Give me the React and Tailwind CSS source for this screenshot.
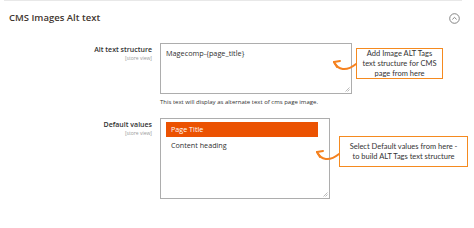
import React from "react";

function CurlArrow({ className, d }) {
  return (
    <svg className={className} width="28" height="16" viewBox="0 0 28 16" fill="none">
      <path d={d} stroke="#f58220" strokeWidth="2" fill="none" strokeLinecap="round" />
      <path d="M2 4 L8 3 M2 4 L5 9" stroke="#f58220" strokeWidth="2" strokeLinecap="round" />
    </svg>
  );
}

export default function App() {
  return (
    <div className="w-[474px] h-[228px] bg-white overflow-hidden font-['Open_Sans',sans-serif] text-[#303030]">
      <div className="mx-[4px] border-t border-[#e8e8e8] w-[458px]" />
      <div className="flex items-center justify-between pl-[9px] pr-[14px] pt-[10px]">
        <h2 className="text-[9.5px] font-semibold text-[#41362f] leading-[14px]">CMS Images Alt text</h2>
        <svg width="11" height="11" viewBox="0 0 11 11" fill="none">
          <circle cx="5.5" cy="5.5" r="4.8" stroke="#777" strokeWidth="0.9" />
          <path d="M3.4 6.4 L5.5 4.4 L7.6 6.4" stroke="#777" strokeWidth="0.9" fill="none" />
        </svg>
      </div>

      <div className="flex mt-[18px]">
        <div className="w-[152px] flex flex-col items-end pt-[2px]">
          <span className="text-[7px] font-semibold leading-[10px] text-[#303030]">Alt text structure</span>
          <span className="text-[5px] leading-[7px] text-[#999]">[store view]</span>
        </div>
        <div className="ml-[8px] flex flex-col">
          <div className="relative w-[192px] h-[51px] border border-[#adadad] px-[5px] pt-[4px] text-[7.3px] leading-[11px] text-[#303030]">
            Magecomp-{"{"}page_title{"}"}
            <svg className="absolute right-[1px] bottom-[1px]" width="5" height="5" viewBox="0 0 5 5">
              <path d="M0.5 4.5 L4.5 0.5 M2.5 4.5 L4.5 2.5" stroke="#aaa" strokeWidth="0.8" />
            </svg>
          </div>
          <span className="mt-[4px] text-[6px] leading-[8px] text-[#303030]">This text will display as alternate text of cms page image.</span>
        </div>
        <div className="relative ml-[4px] mt-[5px] w-[87px] h-[31px] border-[1.5px] border-[#f58a1f] flex items-center justify-center text-center font-['Lato',sans-serif] text-[7.5px] leading-[10px] text-[#333]">
          <span>Add Image ALT Tags<br />text structure for CMS<br />page from here</span>
          <CurlArrow className="absolute left-[-25px] top-[9px]" d="M2 4 C 6 12, 14 14, 24 6" />
        </div>
      </div>

      <div className="flex mt-[12px]">
        <div className="w-[152px] flex flex-col items-end pt-[2px]">
          <span className="text-[7px] font-semibold leading-[10px] text-[#303030]">Default values</span>
          <span className="text-[5px] leading-[7px] text-[#999]">[store view]</span>
        </div>
        <div className="relative ml-[8px] w-[170px] h-[81px] border border-[#adadad] px-[5px] pt-[3px] text-[7.2px]">
          <div className="w-[152px] h-[15px] bg-[#eb5202] text-white px-[5px] leading-[15px]">Page Title</div>
          <div className="px-[5px] leading-[12px] mt-[2px] text-[#303030]">Content heading</div>
          <svg className="absolute right-[1px] bottom-[1px]" width="5" height="5" viewBox="0 0 5 5">
            <path d="M0.5 4.5 L4.5 0.5 M2.5 4.5 L4.5 2.5" stroke="#aaa" strokeWidth="0.8" />
          </svg>
        </div>
        <div className="relative ml-[9px] mt-[18px] w-[129px] h-[31px] border-[1.5px] border-[#f58a1f] flex items-center justify-center text-center font-['Lato',sans-serif] text-[7.5px] leading-[10px] text-[#333]">
          <span>Select Default values from here -<br />to build ALT Tags text structure</span>
          <CurlArrow className="absolute left-[-25px] top-[11px]" d="M2 4 C 6 12, 14 14, 24 6" />
        </div>
      </div>
    </div>
  );
}
